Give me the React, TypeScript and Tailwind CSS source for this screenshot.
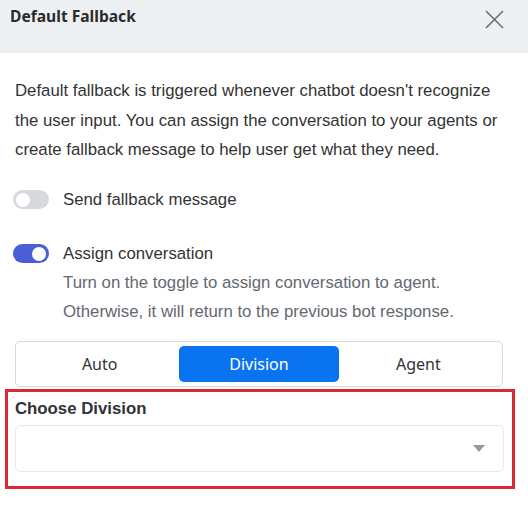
import React, { useState } from 'react';

const Toggle: React.FC<{ on: boolean; onChange: () => void }> = ({ on, onChange }) => (
    <button
        onClick={onChange}
        className={`relative h-[19px] w-[36px] shrink-0 rounded-full ${on ? 'bg-[#4a5ed8]' : 'bg-[#d6dadf]'}`}
    >
        <span
            className={`absolute top-[2.5px] h-[14px] w-[14px] rounded-full bg-white ${on ? 'left-[19px]' : 'left-[3px]'}`}
        />
    </button>
);

export default function App() {
    const [sendMessage, setSendMessage] = useState(false);
    const [assign, setAssign] = useState(true);
    const [mode, setMode] = useState('Division');

    return (
        <div className="w-[528px] h-[509px] bg-white text-[#333] font-['Liberation_Sans',Arial,sans-serif]">
            <div className="h-[53px] bg-[#edf0f3] flex justify-between items-start pl-[10px] pr-[24px]">
                <h2 className="mt-[5px] text-[15.6px] font-bold text-[#2b2b2b] font-['Noto_Sans',sans-serif]">Default Fallback</h2>
                <button className="mt-[10px] text-[#676e77]">
                    <svg width="19" height="19" viewBox="0 0 19 19" fill="none" stroke="currentColor" strokeWidth="1.6">
                        <path d="M1 1 L18 18 M18 1 L1 18" />
                    </svg>
                </button>
            </div>

            <div className="px-[15px]">
                <p className="mt-[23px] text-[16.8px] leading-[29.5px] text-[#333]">
                    Default fallback is triggered whenever chatbot doesn't recognize<br />
                    the user input. You can assign the conversation to your agents or<br />
                    create fallback message to help user get what they need.
                </p>

                <div className="mt-[25px] flex items-center gap-[14px] -ml-[2px]">
                    <Toggle on={sendMessage} onChange={() => setSendMessage(!sendMessage)} />
                    <span className="text-[16.8px] leading-[20px]">Send fallback message</span>
                </div>

                <div className="mt-[34px] flex items-center gap-[14px] -ml-[2px]">
                    <Toggle on={assign} onChange={() => setAssign(!assign)} />
                    <span className="text-[16.8px] leading-[20px]">Assign conversation</span>
                </div>
                <div className="ml-[48px] mt-[4px] text-[16.8px] leading-[29px] text-[#636870]">
                    <p>Turn on the toggle to assign conversation to agent.</p>
                    <p>Otherwise, it will return to the previous bot response.</p>
                </div>

                <div className="mt-[15px] h-[46px] w-[488px] rounded-[5px] border border-[#d5d9de] p-[4px] flex font-['Noto_Sans',sans-serif] text-[16px]">
                    {['Auto', 'Division', 'Agent'].map(m => (
                        <button
                            key={m}
                            onClick={() => setMode(m)}
                            className={`flex-1 rounded-[5px] ${mode === m ? 'bg-[#0a74f0] text-white' : 'text-[#333]'}`}
                        >
                            {m}
                        </button>
                    ))}
                </div>
            </div>

            <div className="mx-[5px] mt-[2px] h-[100px] w-[510px] border-[3px] border-[#dc2833] px-[7px] pt-[6px]">
                <label className="block text-[16.8px] font-bold leading-[22px] text-[#2f3237]">Choose Division</label>
                <div className="mt-[5px] h-[47px] w-[489px] rounded-[6px] border border-[#e5e7ea] flex items-center justify-end pr-[18px]">
                    <svg width="12" height="7" viewBox="0 0 12 7">
                        <path d="M0 0 L12 0 L6 7 Z" fill="#9a9a9a" />
                    </svg>
                </div>
            </div>
        </div>
    );
}
